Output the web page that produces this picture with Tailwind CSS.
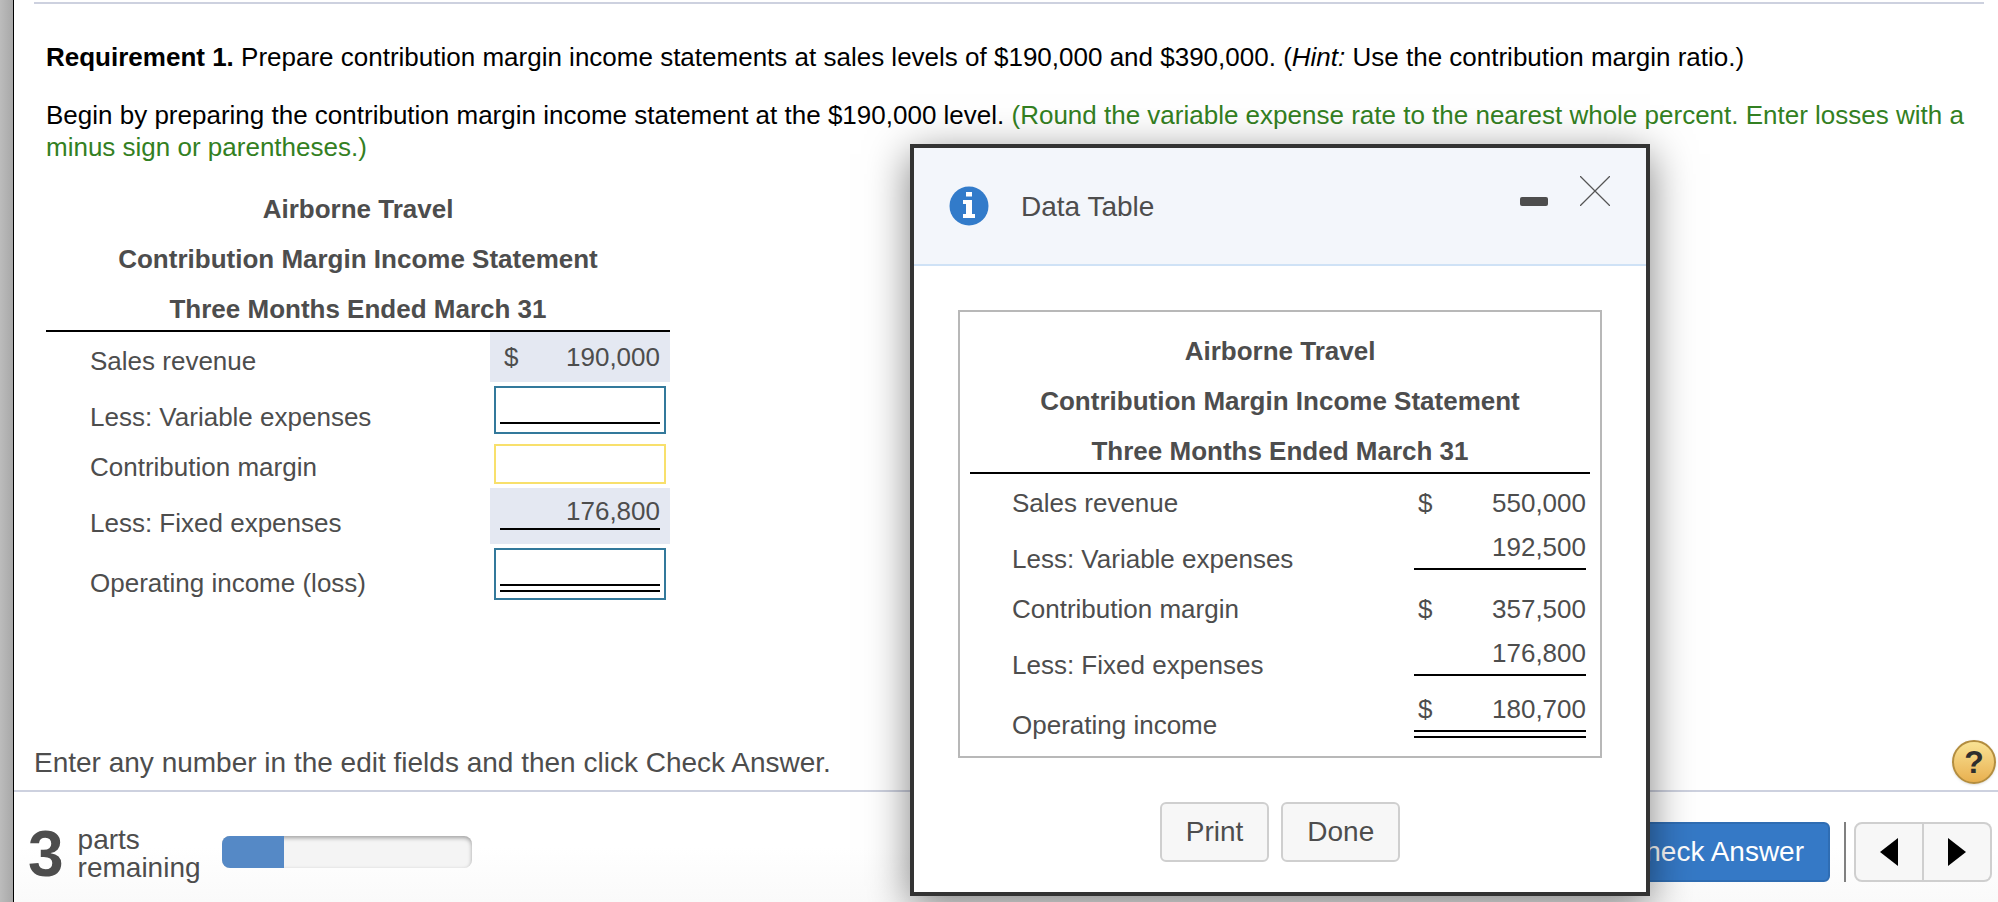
<!DOCTYPE html>
<html lang="en">
<head>
    <meta charset="UTF-8">
    <meta name="viewport" content="width=device-width, initial-scale=1.0">
    <title>Contribution Margin Income Statement</title>
    <script src="https://cdn.jsdelivr.net/npm/@tailwindcss/browser@4"></script>
</head>
<body class="relative flex min-h-screen bg-white font-['Liberation_Sans',Arial,sans-serif] text-[26px] leading-[30px] text-[#4d4d4d]">
    <div class="w-[14px] shrink-0 border-r border-black bg-linear-to-r from-[#bcbcbc] to-[#a8a8a8]"></div>

    <div class="flex min-w-0 flex-1 flex-col">
        <main class="flex flex-1 flex-col pt-[2px]">
            <hr class="mr-[14px] ml-5 border-t-2 border-[#cdd1df]">

            <div class="px-8 pt-[37px] leading-8 text-black">
                <p class="mb-[26px]"><b>Requirement 1.</b> Prepare contribution margin income statements at sales levels of $190,000 and $390,000. (<i>Hint:</i> Use the contribution margin ratio.)</p>
                <p>Begin by preparing the contribution margin income statement at the $190,000 level. <span class="text-[#338022]">(Round the variable expense rate to the nearest whole percent. Enter losses with a minus sign or parentheses.)</span></p>
            </div>

            <!-- Worksheet -->
            <table class="mt-[17px] ml-8 w-[624px] border-separate border-spacing-0">
                <thead>
                    <tr><th colspan="2" class="h-[50px] p-0 pb-[6px] align-bottom">Airborne Travel</th></tr>
                    <tr><th colspan="2" class="h-[50px] p-0 pb-[6px] align-bottom">Contribution Margin Income Statement</th></tr>
                    <tr><th colspan="2" class="h-[52px] border-b-2 border-black p-0 pb-[6px] align-bottom">Three Months Ended March 31</th></tr>
                </thead>
                <tbody>
                    <tr class="h-[50px]">
                        <td class="pb-[6px] pl-11 align-bottom">Sales revenue</td>
                        <td class="w-[180px] bg-[#e4e8f2] px-[10px] align-middle">
                            <div class="flex justify-between pl-1"><span>$</span><span>190,000</span></div>
                        </td>
                    </tr>
                    <tr class="h-14">
                        <td class="pb-[6px] pl-11 align-bottom"><label for="variable">Less: Variable expenses</label></td>
                        <td class="px-1 align-middle">
                            <div class="h-12 border-2 border-[#33799b] px-1">
                                <input id="variable" type="text" class="block h-9 w-full border-b-2 border-black text-right outline-none">
                            </div>
                        </td>
                    </tr>
                    <tr class="h-[50px]">
                        <td class="pb-[6px] pl-11 align-bottom"><label for="margin">Contribution margin</label></td>
                        <td class="px-1 pb-1 align-bottom">
                            <input id="margin" type="text" class="block h-10 w-full border-2 border-[#f8e06c] px-1 text-right outline-none">
                        </td>
                    </tr>
                    <tr class="h-14">
                        <td class="pb-[6px] pl-11 align-bottom">Less: Fixed expenses</td>
                        <td class="bg-[#e4e8f2] px-[10px] pt-2 align-top">
                            <div class="border-b-2 border-black pb-[2px] text-right">176,800</div>
                        </td>
                    </tr>
                    <tr class="h-[60px]">
                        <td class="pb-[6px] pl-11 align-bottom"><label for="income">Operating income (loss)</label></td>
                        <td class="px-1 align-middle">
                            <div class="h-[52px] border-2 border-[#33799b] px-1">
                                <input id="income" type="text" class="block h-9 w-full border-b-2 border-black text-right outline-none">
                                <div class="h-[6px] border-b-2 border-black"></div>
                            </div>
                        </td>
                    </tr>
                </tbody>
            </table>

            <div class="mt-auto flex items-center justify-between pt-8 pr-[2px] pb-[6px] pl-5 text-[28px]">
                <p class="pt-[2px]">Enter any number in the edit fields and then click Check Answer.</p>
                <button class="h-11 w-11 rounded-full border-2 border-[#b38d3f] bg-linear-to-b from-[#f9e394] to-[#e8b04f] text-[32px] leading-9 font-bold text-[#2e2e2e] shadow-sm" aria-label="Help">?</button>
            </div>
        </main>

        <footer class="flex h-[112px] items-center border-t-2 border-[#cdd1df] bg-linear-to-b from-white from-50% to-[#fafafa] pt-[10px] pr-[6px] pl-[14px]">
            <span class="mt-1 text-[64px] leading-[64px] font-bold">3</span>
            <span class="mt-1 ml-[14px] text-[28px] leading-7">parts<br>remaining</span>
            <div class="ml-[21px] h-8 w-[250px] overflow-hidden rounded-lg bg-[#f4f4f4] shadow-[inset_0_2px_4px_rgba(0,0,0,0.35)]" role="progressbar" aria-valuenow="25" aria-valuemin="0" aria-valuemax="100">
                <div class="h-full bg-[#5589c6]" style="width: 25%"></div>
            </div>

            <div class="ml-auto flex h-[60px]">
                <button class="rounded-md border-2 border-[#2f6db3] bg-[#3579c6] px-6 text-[28px] text-white">Check Answer</button>
                <div class="mr-2 ml-[14px] w-[2px] bg-[#808080]"></div>
                <button class="flex w-[70px] items-center justify-center rounded-l-lg border-2 border-[#cfcfcf] bg-[#f7f7f7]" aria-label="Previous">
                    <svg width="18" height="28" viewBox="0 0 18 28"><path d="M18 0v28L0 14z" fill="#000"/></svg>
                </button>
                <button class="flex w-[68px] items-center justify-center rounded-r-lg border-2 border-l-0 border-[#cfcfcf] bg-[#f7f7f7]" aria-label="Next">
                    <svg width="18" height="28" viewBox="0 0 18 28"><path d="M0 0v28l18-14z" fill="#000"/></svg>
                </button>
            </div>
        </footer>
    </div>

    <!-- Data table window -->
    <section class="absolute top-36 right-[348px] w-[740px] border-4 border-[#333] bg-white shadow-[0_10px_40px_rgba(0,0,0,0.5)]">
        <header class="flex h-[118px] items-start border-b-2 border-[#cfe2f6] bg-[#f3f6fb] pr-9 pl-[35px] text-[28px]">
            <svg class="mt-[38px]" width="40" height="40" viewBox="0 0 40 40">
                <circle cx="20" cy="20" r="19.500" fill="#327bca"/>
                <path d="M17 6h6v4.500h-6zM14 14h9v14h3v4H14v-4h3V18h-3z" fill="#fff"/>
            </svg>
            <h2 class="mt-11 ml-8">Data Table</h2>
            <button class="mt-[49px] ml-auto h-[9px] w-7 rounded-[2px] bg-[#4d4d4d]" aria-label="Minimize"></button>
            <button class="mt-7 ml-8" aria-label="Close">
                <svg width="30" height="30" viewBox="0 0 30 30"><path d="M0 0l30 30M30 0L0 30" stroke="#555" stroke-width="1.250"/></svg>
            </button>
        </header>

        <div class="mx-11 mt-11 border-2 border-[#b8b8b8] p-[10px]">
            <table class="w-full border-separate border-spacing-0">
                <thead>
                    <tr><th colspan="2" class="h-[50px] p-0 pb-[6px] align-bottom">Airborne Travel</th></tr>
                    <tr><th colspan="2" class="h-[50px] p-0 pb-[6px] align-bottom">Contribution Margin Income Statement</th></tr>
                    <tr><th colspan="2" class="h-[52px] border-b-2 border-black p-0 pb-[6px] align-bottom">Three Months Ended March 31</th></tr>
                </thead>
                <tbody>
                    <tr class="h-[50px]">
                        <td class="pb-[6px] pl-[42px] align-bottom">Sales revenue</td>
                        <td class="w-[180px] px-1 pb-[6px] align-bottom">
                            <div class="flex justify-between pl-1"><span>$</span><span>550,000</span></div>
                        </td>
                    </tr>
                    <tr class="h-14">
                        <td class="pb-[6px] pl-[42px] align-bottom">Less: Variable expenses</td>
                        <td class="px-1 pt-2 align-top">
                            <div class="border-b-2 border-black pb-[6px] text-right">192,500</div>
                        </td>
                    </tr>
                    <tr class="h-[50px]">
                        <td class="pb-[6px] pl-[42px] align-bottom">Contribution margin</td>
                        <td class="px-1 pb-[6px] align-bottom">
                            <div class="flex justify-between pl-1"><span>$</span><span>357,500</span></div>
                        </td>
                    </tr>
                    <tr class="h-14">
                        <td class="pb-[6px] pl-[42px] align-bottom">Less: Fixed expenses</td>
                        <td class="px-1 pt-2 align-top">
                            <div class="border-b-2 border-black pb-[6px] text-right">176,800</div>
                        </td>
                    </tr>
                    <tr class="h-[60px]">
                        <td class="pb-[6px] pl-[42px] align-bottom">Operating income</td>
                        <td class="px-1 pt-2 align-top">
                            <div class="flex justify-between border-b-2 border-black pb-[6px] pl-1"><span>$</span><span>180,700</span></div>
                            <div class="h-[6px] border-b-2 border-black"></div>
                        </td>
                    </tr>
                </tbody>
            </table>
        </div>

        <div class="mt-11 mb-[30px] flex justify-center gap-3 text-[28px]">
            <button class="h-[60px] rounded-md border-2 border-[#cfcfcf] bg-[#f7f7f7] px-6">Print</button>
            <button class="h-[60px] rounded-md border-2 border-[#cfcfcf] bg-[#f7f7f7] px-6">Done</button>
        </div>
    </section>
</body>
</html>
